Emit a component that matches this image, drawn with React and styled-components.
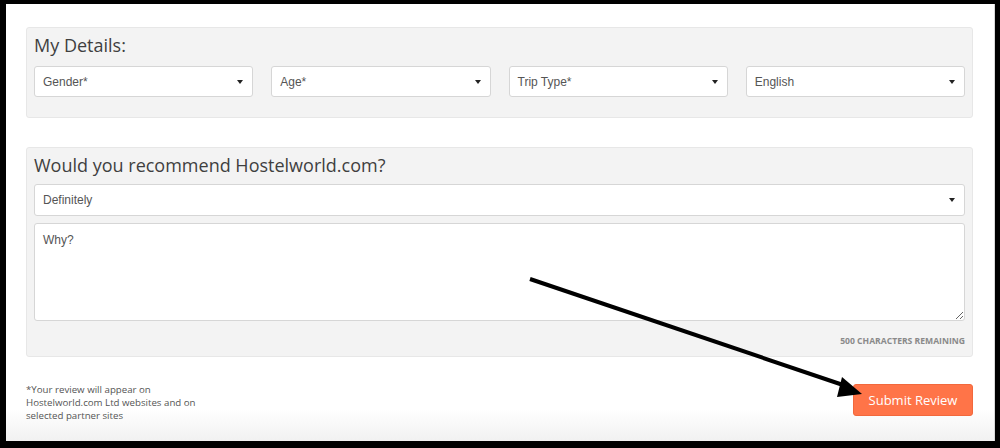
import styled, { createGlobalStyle } from "styled-components";

const GlobalStyle = createGlobalStyle`
  html, body {
    margin: 0;
    padding: 0;
    background: #000;
  }
  * {
    box-sizing: border-box;
  }
`;

const Frame = styled.div`
  position: relative;
  width: 1000px;
  height: 448px;
  border-style: solid;
  border-color: #000;
  border-width: 4px 5px 7px 6px;
  background: linear-gradient(to bottom, #fff 0, #fff 405px, #f1f1f1 437px);
  padding: 23px 22px 0 20px;
  display: flex;
  flex-direction: column;
  overflow: hidden;
  box-shadow: inset -1px 0 0 #d8d8d8;
`;

const Panel = styled.section`
  background: #f3f3f3;
  border: 1px solid #e7e7e7;
  border-radius: 3px;
  padding: ${(p) => p.$pad || "5px 7px 20px 7px"};
  margin-bottom: ${(p) => p.$mb || "0"};
`;

const Title = styled.h2`
  margin: 0 0 ${(p) => p.$gap || "9px"} 0;
  font-family: "Open Sans", sans-serif;
  font-weight: 400;
  font-size: 18px;
  line-height: 24px;
  color: #3f3f3f;
`;

const SelectRow = styled.div`
  display: grid;
  grid-template-columns: repeat(4, 1fr);
  column-gap: 18px;
`;

const Select = styled.div`
  height: ${(p) => p.$h || "31px"};
  background: #fff;
  border: 1px solid #d6d6d6;
  border-radius: 3px;
  display: flex;
  align-items: center;
  justify-content: space-between;
  padding: 0 9px 0 8px;
  font-family: "Liberation Sans", Arial, sans-serif;
  font-size: 12px;
  color: #555;
  margin-bottom: ${(p) => p.$mb || "0"};
`;

const Caret = styled.span`
  width: 0;
  height: 0;
  border-left: 3px solid transparent;
  border-right: 3px solid transparent;
  border-top: 4px solid #222;
`;

const TextArea = styled.textarea`
  display: block;
  width: 100%;
  height: 98px;
  resize: vertical;
  border: 1px solid #d6d6d6;
  border-radius: 3px;
  padding: 9px 8px;
  font-family: "Liberation Sans", Arial, sans-serif;
  font-size: 12px;
  color: #555;
  background: #fff;
  outline: none;

  &::placeholder {
    color: #555;
  }
`;

const Remaining = styled.div`
  text-align: right;
  font-family: "Open Sans", sans-serif;
  font-weight: 700;
  font-size: 8.6px;
  color: #8a8a8a;
  margin-top: 14px;
  line-height: 12px;
`;

const Footer = styled.div`
  display: flex;
  justify-content: space-between;
  align-items: flex-start;
  margin-top: 26px;
`;

const Note = styled.p`
  margin: 0;
  width: 200px;
  font-family: "Open Sans", sans-serif;
  font-size: 9.7px;
  line-height: 13px;
  color: #555;
`;

const SubmitButton = styled.button`
  width: 120px;
  height: 32px;
  margin-top: 1px;
  background: #ff7448;
  border: 1px solid #f2683c;
  border-radius: 3px;
  color: #fff;
  font-family: "Open Sans", sans-serif;
  font-size: 13px;
  cursor: pointer;
`;

const ArrowOverlay = styled.svg`
  position: absolute;
  left: -6px;
  top: -4px;
  width: 1000px;
  height: 448px;
  pointer-events: none;
`;

const details = ["Gender*", "Age*", "Trip Type*", "English"];

export default function App() {
  return (
    <>
      <GlobalStyle />
      <Frame>
        <Panel $mb="29px">
          <Title>My Details:</Title>
          <SelectRow>
            {details.map((d) => (
              <Select key={d} $h="31px">
                <span>{d}</span>
                <Caret />
              </Select>
            ))}
          </SelectRow>
        </Panel>

        <Panel $pad="5px 7px 9px 7px">
          <Title $gap="7px">Would you recommend Hostelworld.com?</Title>
          <Select $h="32px" $mb="7px">
            <span>Definitely</span>
            <Caret />
          </Select>
          <TextArea placeholder="Why?" />
          <Remaining>500 CHARACTERS REMAINING</Remaining>
        </Panel>

        <Footer>
          <Note>
            *Your review will appear on Hostelworld.com Ltd websites and on
            selected partner sites
          </Note>
          <SubmitButton>Submit Review</SubmitButton>
        </Footer>

        <ArrowOverlay viewBox="0 0 1000 448">
          <line x1="530" y1="279" x2="846" y2="386" stroke="#000" strokeWidth="4" />
          <polygon points="842,377 862,394 837,397" fill="#000" />
        </ArrowOverlay>
      </Frame>
    </>
  );
}
